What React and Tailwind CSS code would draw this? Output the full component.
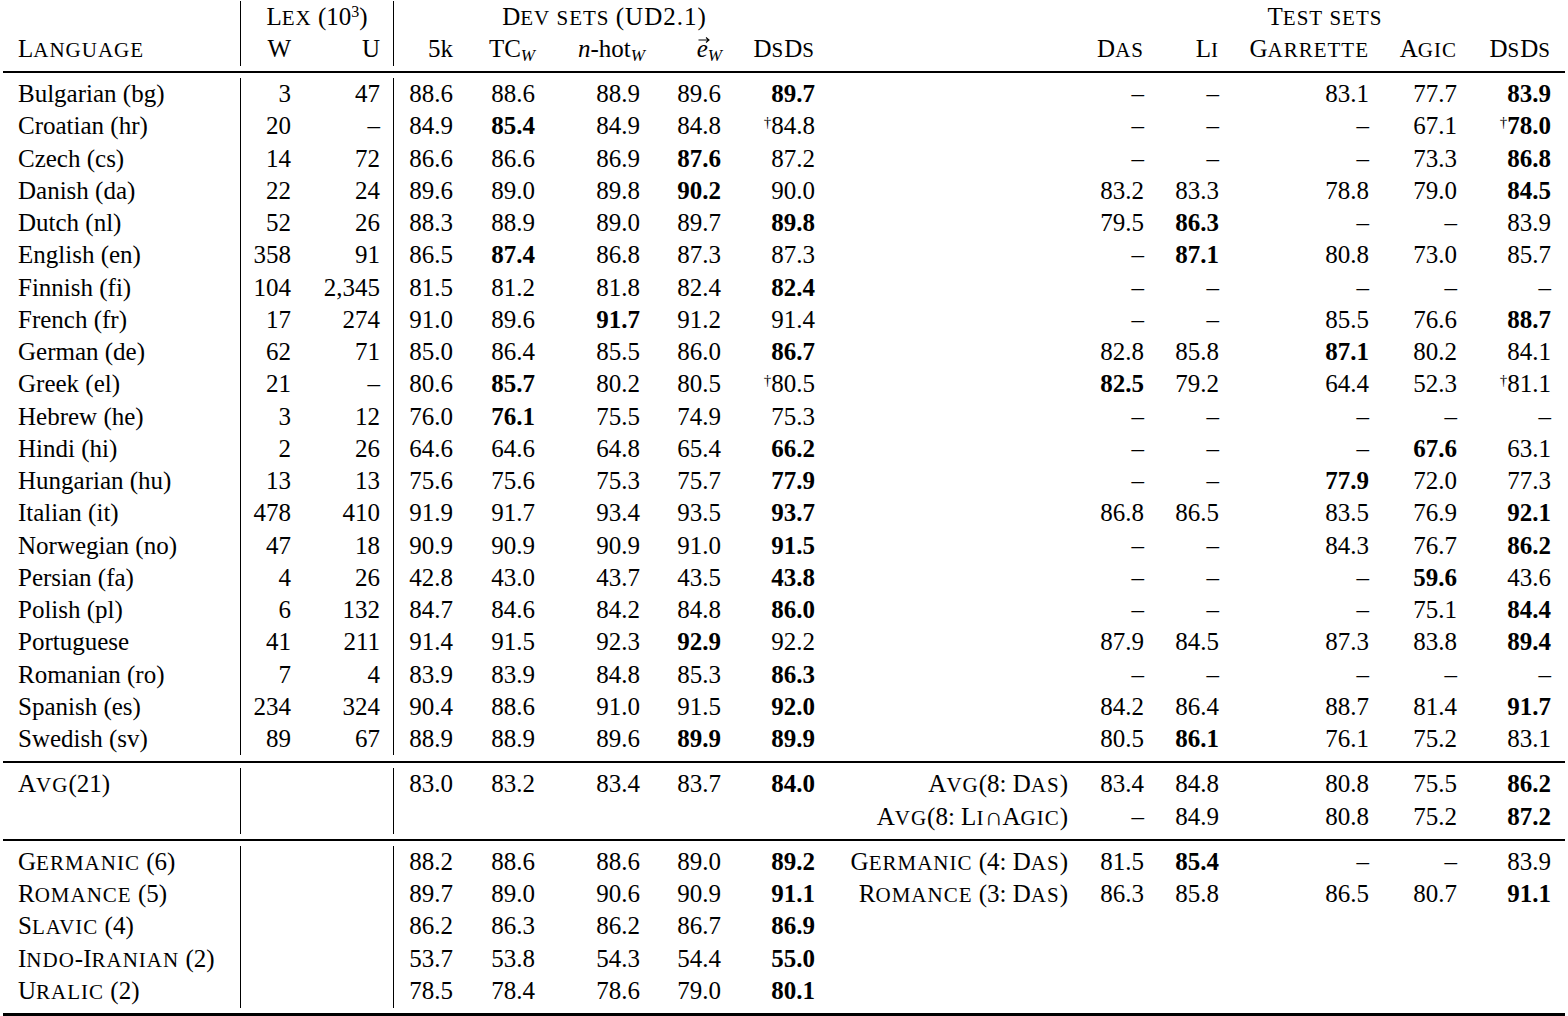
import React from "react";

const COLS =
    "grid grid-cols-[240px_51px_89px_14px_59px_82px_105px_81px_94px_253px_76px_75px_150px_88px_94px_17px]";

// small caps drawn by hand: lower case letters become smaller capitals
const SC = ({ children }) => {
    const parts = [];
    let buf = "";
    let low = null;
    const flush = () => {
        if (!buf) return;
        parts.push(
            low ? (
                <span key={parts.length} className="text-[21px] tracking-[1px] uppercase">
                    {buf}
                </span>
            ) : (
                <span key={parts.length}>{buf}</span>
            )
        );
        buf = "";
    };
    for (const ch of children) {
        const isLow = ch !== ch.toUpperCase();
        if (low !== null && isLow !== low) flush();
        low = isLow;
        buf += ch;
    }
    flush();
    return <>{parts}</>;
};

// "*" marks a bold value, "†" a dagger in front of it
const Val = ({ v }) => {
    if (!v) return null;
    let s = v;
    let dag = false;
    let bold = false;
    if (s.startsWith("†")) {
        dag = true;
        s = s.slice(1);
    }
    if (s.startsWith("*")) {
        bold = true;
        s = s.slice(1);
    }
    return (
        <>
            {dag && <sup className="text-[15px]">†</sup>}
            <span className={bold ? "font-bold" : ""}>{s}</span>
        </>
    );
};

const Row = ({ label, lex = [], dev = [], mid, test = [] }) => (
    <div className={`${COLS} h-[32.25px] leading-[32.25px]`}>
        <div className="pl-[18px] whitespace-nowrap">{label}</div>
        <div className="border-l border-black text-right">
            <Val v={lex[0]} />
        </div>
        <div className="text-right">
            <Val v={lex[1]} />
        </div>
        <div className="border-r border-black" />
        {[0, 1, 2, 3, 4].map((i) => (
            <div key={"d" + i} className="text-right whitespace-nowrap">
                <Val v={dev[i]} />
            </div>
        ))}
        <div className="text-right whitespace-nowrap">{mid}</div>
        {[0, 1, 2, 3, 4].map((i) => (
            <div key={"t" + i} className="text-right whitespace-nowrap">
                <Val v={test[i]} />
            </div>
        ))}
        <div />
    </div>
);

const Rule = ({ h = "h-[13px]", line = "h-[2px]", pt = "pt-[6px]" }) => (
    <div className={`${h} ${pt}`}>
        <div className={`${line} mx-[3px] bg-black`} />
    </div>
);

const rows = [
    ["Bulgarian (bg)", ["3", "47"], ["88.6", "88.6", "88.9", "89.6", "*89.7"], ["–", "–", "83.1", "77.7", "*83.9"]],
    ["Croatian (hr)", ["20", "–"], ["84.9", "*85.4", "84.9", "84.8", "†84.8"], ["–", "–", "–", "67.1", "†*78.0"]],
    ["Czech (cs)", ["14", "72"], ["86.6", "86.6", "86.9", "*87.6", "87.2"], ["–", "–", "–", "73.3", "*86.8"]],
    ["Danish (da)", ["22", "24"], ["89.6", "89.0", "89.8", "*90.2", "90.0"], ["83.2", "83.3", "78.8", "79.0", "*84.5"]],
    ["Dutch (nl)", ["52", "26"], ["88.3", "88.9", "89.0", "89.7", "*89.8"], ["79.5", "*86.3", "–", "–", "83.9"]],
    ["English (en)", ["358", "91"], ["86.5", "*87.4", "86.8", "87.3", "87.3"], ["–", "*87.1", "80.8", "73.0", "85.7"]],
    ["Finnish (fi)", ["104", "2,345"], ["81.5", "81.2", "81.8", "82.4", "*82.4"], ["–", "–", "–", "–", "–"]],
    ["French (fr)", ["17", "274"], ["91.0", "89.6", "*91.7", "91.2", "91.4"], ["–", "–", "85.5", "76.6", "*88.7"]],
    ["German (de)", ["62", "71"], ["85.0", "86.4", "85.5", "86.0", "*86.7"], ["82.8", "85.8", "*87.1", "80.2", "84.1"]],
    ["Greek (el)", ["21", "–"], ["80.6", "*85.7", "80.2", "80.5", "†80.5"], ["*82.5", "79.2", "64.4", "52.3", "†81.1"]],
    ["Hebrew (he)", ["3", "12"], ["76.0", "*76.1", "75.5", "74.9", "75.3"], ["–", "–", "–", "–", "–"]],
    ["Hindi (hi)", ["2", "26"], ["64.6", "64.6", "64.8", "65.4", "*66.2"], ["–", "–", "–", "*67.6", "63.1"]],
    ["Hungarian (hu)", ["13", "13"], ["75.6", "75.6", "75.3", "75.7", "*77.9"], ["–", "–", "*77.9", "72.0", "77.3"]],
    ["Italian (it)", ["478", "410"], ["91.9", "91.7", "93.4", "93.5", "*93.7"], ["86.8", "86.5", "83.5", "76.9", "*92.1"]],
    ["Norwegian (no)", ["47", "18"], ["90.9", "90.9", "90.9", "91.0", "*91.5"], ["–", "–", "84.3", "76.7", "*86.2"]],
    ["Persian (fa)", ["4", "26"], ["42.8", "43.0", "43.7", "43.5", "*43.8"], ["–", "–", "–", "*59.6", "43.6"]],
    ["Polish (pl)", ["6", "132"], ["84.7", "84.6", "84.2", "84.8", "*86.0"], ["–", "–", "–", "75.1", "*84.4"]],
    ["Portuguese", ["41", "211"], ["91.4", "91.5", "92.3", "*92.9", "92.2"], ["87.9", "84.5", "87.3", "83.8", "*89.4"]],
    ["Romanian (ro)", ["7", "4"], ["83.9", "83.9", "84.8", "85.3", "*86.3"], ["–", "–", "–", "–", "–"]],
    ["Spanish (es)", ["234", "324"], ["90.4", "88.6", "91.0", "91.5", "*92.0"], ["84.2", "86.4", "88.7", "81.4", "*91.7"]],
    ["Swedish (sv)", ["89", "67"], ["88.9", "88.9", "89.6", "*89.9", "*89.9"], ["80.5", "*86.1", "76.1", "75.2", "83.1"]],
];

const groups = [
    ["Germanic (6)", ["88.2", "88.6", "88.6", "89.0", "*89.2"], "Germanic (4: Das)", ["81.5", "*85.4", "–", "–", "83.9"]],
    ["Romance (5)", ["89.7", "89.0", "90.6", "90.9", "*91.1"], "Romance (3: Das)", ["86.3", "85.8", "86.5", "80.7", "*91.1"]],
    ["Slavic (4)", ["86.2", "86.3", "86.2", "86.7", "*86.9"]],
    ["Indo-Iranian (2)", ["53.7", "53.8", "54.3", "54.4", "*55.0"]],
    ["Uralic (2)", ["78.5", "78.4", "78.6", "79.0", "*80.1"]],
];

const Sub = ({ children }) => <sub className="italic text-[17px]">{children}</sub>;

export default function App() {
    return (
        <div className="w-[1568px] h-[1016px] overflow-hidden bg-white text-black text-[25px] font-['Liberation_Serif','Times_New_Roman',serif] pt-[1px]">
            {/* header line 1 */}
            <div className={`${COLS} h-[32px] leading-[32px]`}>
                <div />
                <div className="col-span-3 border-x border-black text-center">
                    <SC>Lex</SC> (10<sup className="text-[16px]">3</sup>)
                </div>
                <div className="col-span-5 text-center whitespace-nowrap">
                    <SC>Dev sets</SC> <span className="tracking-[1px]">(UD2.1)</span>
                </div>
                <div />
                <div className="col-span-6 text-center pl-[14px]">
                    <SC>Test sets</SC>
                </div>
            </div>
            {/* header line 2 */}
            <div className={`${COLS} h-[32px] leading-[32px]`}>
                <div className="pl-[18px]">
                    <SC>Language</SC>
                </div>
                <div className="border-l border-black text-right">W</div>
                <div className="text-right">U</div>
                <div className="border-r border-black" />
                <div className="text-right">5k</div>
                <div className="text-right">
                    TC<Sub>W</Sub>
                </div>
                <div className="text-right whitespace-nowrap -mr-[5px]">
                    <i>n</i>-hot<Sub>W</Sub>
                </div>
                <div className="text-right -mr-[1px]">
                    <span className="relative inline-block italic">
                        e
                        <svg
                            className="absolute left-[1px] top-[3px]"
                            width="12"
                            height="8"
                            viewBox="0 0 12 8"
                        >
                            <path
                                d="M0.5 4H11M8 1.5L11 4L8 6.5"
                                stroke="black"
                                strokeWidth="1.1"
                                fill="none"
                            />
                        </svg>
                    </span>
                    <Sub>W</Sub>
                </div>
                <div className="text-right">
                    <SC>DsDs</SC>
                </div>
                <div />
                <div className="text-right">
                    <SC>Das</SC>
                </div>
                <div className="text-right">
                    <SC>Li</SC>
                </div>
                <div className="text-right">
                    <SC>Garrette</SC>
                </div>
                <div className="text-right">
                    <SC>Agic</SC>
                </div>
                <div className="text-right">
                    <SC>DsDs</SC>
                </div>
                <div />
            </div>

            <Rule />

            {rows.map(([label, lex, dev, test]) => (
                <Row key={label} label={label} lex={lex} dev={dev} test={test} />
            ))}

            <Rule />

            <Row
                label={<SC>Avg(21)</SC>}
                dev={["83.0", "83.2", "83.4", "83.7", "*84.0"]}
                mid={<SC>Avg(8: Das)</SC>}
                test={["83.4", "84.8", "80.8", "75.5", "*86.2"]}
            />
            <Row
                mid={<SC>Avg(8: Li∩Agic)</SC>}
                test={["–", "84.9", "80.8", "75.2", "*87.2"]}
            />

            <Rule />

            {groups.map(([label, dev, mid, test]) => (
                <Row
                    key={label}
                    label={<SC>{label}</SC>}
                    dev={dev}
                    mid={mid && <SC>{mid}</SC>}
                    test={test}
                />
            ))}

            <Rule h="h-[10px]" line="h-[3px]" pt="pt-[6px]" />
        </div>
    );
}
